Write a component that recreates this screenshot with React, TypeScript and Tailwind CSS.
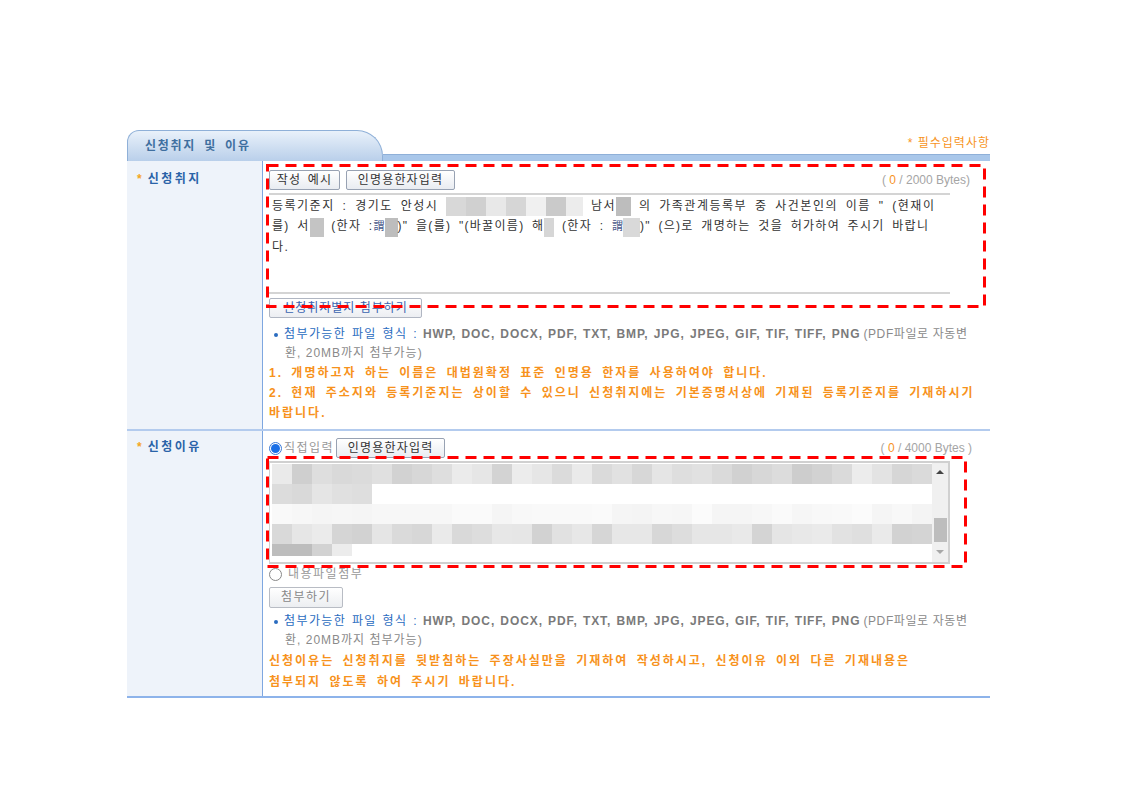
import React from 'react';

const shade = (seed: number, min: number, max: number) => {
  const x = Math.sin(seed * 12.9898) * 43758.5453;
  const f = x - Math.floor(x);
  const v = Math.round(min + f * (max - min));
  return `rgb(${v},${v},${v})`;
};

const Blocks: React.FC<{ count: number; seed: number; min: number; max: number; className?: string }> = ({ count, seed, min, max, className = 'h-[20px]' }) => (
  <div className="flex">
    {Array.from({ length: count }).map((_, i) => (
      <div key={i} className={`w-[20px] ${className}`} style={{ backgroundColor: shade(seed + i, min, max) }} />
    ))}
  </div>
);

const DashedBox: React.FC<{ w: number; h: number; className: string }> = ({ w, h, className }) => (
  <svg width={w} height={h} className={`pointer-events-none absolute ${className}`}>
    <rect x={1.5} y={1.5} width={w - 3} height={h - 3} fill="none" stroke="#ff0000" strokeWidth={3} strokeDasharray="11 7" />
  </svg>
);

const Btn: React.FC<{ children: React.ReactNode; className?: string }> = ({ children, className = '' }) => (
  <button className={`h-[20px] px-0 whitespace-nowrap rounded-[2px] border border-[#98a2b3] bg-gradient-to-b from-white to-[#e9ecf1] text-[12px] leading-[18px] tracking-[1.2px] [word-spacing:2px] text-[#333] ${className}`}>
    {children}
  </button>
);

const Gray: React.FC<{ w: string; c: string }> = ({ w, c }) => (
  <span className={`inline-block h-[19px] align-middle ${w} ${c}`} />
);

const Hanja = () => <span className="text-[11px] text-[#4a5a8a] tracking-normal">謂</span>;

const FileTypes = () => (
  <div className="text-[12px] leading-[19px]">
    <div className="flex items-center whitespace-nowrap">
      <span className="ml-[5px] mr-[6px] h-[4px] w-[4px] rounded-full bg-[#2a6cc0]" />
      <span className="text-[#2a6cc0] tracking-[1.4px] [word-spacing:1px]">첨부가능한 파일 형식 :</span>
      <span className="ml-[5px] font-bold text-[#7a7a7a] tracking-[0.9px] [word-spacing:1px]">HWP, DOC, DOCX, PDF, TXT, BMP, JPG, JPEG, GIF, TIF, TIFF, PNG</span>
      <span className="ml-[3px] text-[#8a8a8a] tracking-[0.6px]">(PDF파일로 자동변</span>
    </div>
    <div className="pl-[16px] text-[#8a8a8a] tracking-[1px]">환, 20MB까지 첨부가능)</div>
  </div>
);

const Label: React.FC<{ text: string; className: string }> = ({ text, className }) => (
  <div className={`bg-[#eef3fa] border-r border-[#7ea7e0] pl-[10px] ${className}`}>
    <div className="flex items-center text-[12px] leading-[16px]">
      <span className="mr-[6px] text-[#f5a623] font-bold">*</span>
      <span className="font-bold text-[#2a63a8] tracking-[2.5px]">{text}</span>
    </div>
  </div>
);

const Orange: React.FC<{ children: React.ReactNode; className?: string }> = ({ children, className = '' }) => (
  <div className={`whitespace-nowrap font-bold text-[12px] text-[#f7921c] tracking-[2px] [word-spacing:3px] ${className}`}>{children}</div>
);

export default function App() {
  return (
    <div className="min-h-[793px] bg-white pt-[128px] font-['Liberation_Sans','Noto_Sans_CJK_KR',sans-serif]">
      <div className="ml-[127px] w-[863px]">
        {/* header */}
        <div className="flex items-end h-[33px]">
          <div className="w-[256px] h-[31px] rounded-tl-[12px] rounded-tr-[26px] border border-b-0 border-[#8fb0d8] bg-gradient-to-b from-[#e9f1fa] to-[#b9cfea] flex items-center pl-[17px] text-[12px] font-bold text-[#3f6f9f] tracking-[1.75px] [word-spacing:3px]">
            신청취지 및 이유
          </div>
          <div className="flex-1 flex flex-col">
            <div className="text-right text-[12px] leading-[16px] text-[#f7941d] tracking-[1px] mb-[3px]">* 필수입력사항</div>
            <div className="h-[7px] bg-[#a9c7ea] border-t border-[#8fb0d8]" />
          </div>
        </div>

        {/* row 1 */}
        <div className="grid grid-cols-[136px_minmax(0,1fr)] border-b-2 border-[#b3cbee]">
          <Label text="신청취지" className="pt-[10px]" />
          <div className="relative pl-[6px] pt-[9px] pb-[6px] pr-[20px]">
            <div className="flex items-center justify-between h-[20px]">
              <div className="flex gap-[6px]">
                <Btn className="w-[71px]">작성 예시</Btn>
                <Btn className="w-[109px]">인명용한자입력</Btn>
              </div>
              <span className="text-[12px] text-[#a5a5a5]">
                ( <span className="text-[#f7931e]">0</span> / 2000 Bytes)
              </span>
            </div>
            <div className="mt-[3px] w-[681px] h-[101px] border-y-2 border-[#d4d4d4] pl-[3px] pt-[1px] text-[12px] leading-[20px] text-[#333] tracking-[1.5px] [word-spacing:3px] whitespace-nowrap">
              <div>
                등록기준지 : 경기도 안성시{' '}
                <span className="inline-flex align-middle">
                  <Gray w="w-[20px]" c="bg-[#d8d8d8]" />
                  <Gray w="w-[20px]" c="bg-[#d0d0d0]" />
                  <Gray w="w-[20px]" c="bg-[#e8e8e8]" />
                  <Gray w="w-[20px]" c="bg-[#d6d6d6]" />
                  <Gray w="w-[20px]" c="bg-[#f0f0f0]" />
                  <Gray w="w-[20px]" c="bg-[#cacaca]" />
                  <Gray w="w-[17px]" c="bg-[#ececec]" />
                </span>{' '}
                남서<Gray w="w-[15px]" c="bg-[#bdbdbd]" /> 의 가족관계등록부 중 사건본인의 이름 " (현재이
              </div>
              <div className="tracking-[1.3px]">
                를) 서<Gray w="w-[14px]" c="bg-[#c4c4c4]" /> (한자 :<Hanja /><Gray w="w-[13px]" c="bg-[#bdbdbd]" />)" 을(를) "(바꿀이름) 해
                <Gray w="w-[10px]" c="bg-[#d6d6d6]" /> (한자 : <Hanja /><Gray w="w-[17px]" c="bg-[#d9d9d9]" />)" (으)로 개명하는 것을 허가하여 주시기 바랍니
              </div>
              <div>다.</div>
            </div>
            <button className="mt-[4px] h-[20px] w-[153px] whitespace-nowrap rounded-[2px] border border-[#b0b6c2] bg-gradient-to-b from-white to-[#eceef2] text-[12px] leading-[18px] text-[#3a64b0] tracking-[1px]">
              신청취지별지 첨부하기
            </button>
            <div className="mt-[6px]">
              <FileTypes />
            </div>
            <div className="leading-[20px]">
              <Orange>1. 개명하고자 하는 이름은 대법원확정 표준 인명용 한자를 사용하여야 합니다.</Orange>
              <Orange>2. 현재 주소지와 등록기준지는 상이할 수 있으니 신청취지에는 기본증명서상에 기재된 등록기준지를 기재하시기</Orange>
              <Orange>바랍니다.</Orange>
            </div>
            <DashedBox w={720} h={144} className="left-[3px] top-[3px]" />
          </div>
        </div>

        {/* row 2 */}
        <div className="grid grid-cols-[136px_minmax(0,1fr)] border-b-2 border-[#8db3ea]">
          <Label text="신청이유" className="pt-[8px]" />
          <div className="relative pl-[6px] pt-[7px] pb-[3px] pr-[18px]">
            <div className="flex items-center justify-between h-[20px]">
              <div className="flex items-center">
                <span className="flex h-[13px] w-[13px] items-center justify-center rounded-full border border-[#3a7ad8] bg-white">
                  <span className="h-[9px] w-[9px] rounded-full bg-[#1a6fe6]" />
                </span>
                <span className="ml-[2px] text-[12px] text-[#999] tracking-[1.5px]">직접입력</span>
                <Btn className="ml-[2px] w-[109px]">인명용한자입력</Btn>
              </div>
              <span className="text-[12px] text-[#a5a5a5]">
                ( <span className="text-[#f7931e]">0</span> / 4000 Bytes )
              </span>
            </div>
            <div className="mt-[3px] flex w-[681px] h-[103px] border-2 border-l border-[#d0d0d0]">
              <div className="flex-1 pl-[2px] pt-[1px] overflow-hidden">
                <Blocks count={33} seed={1} min={205} max={236} />
                <Blocks count={5} seed={50} min={215} max={232} />
                <Blocks count={33} seed={80} min={244} max={251} />
                <Blocks count={33} seed={120} min={210} max={236} />
                <div className="flex">
                  <div className="w-[40px] h-[12px] bg-[#bdbdbd]" />
                  <div className="w-[20px] h-[12px] bg-[#d2d2d2]" />
                  <div className="w-[20px] h-[12px] bg-[#ececec]" />
                </div>
              </div>
              <div className="w-[16px] bg-[#f0f0f0] flex flex-col items-center">
                <svg width="10" height="8" viewBox="0 0 10 8" className="mt-[5px]">
                  <path d="M1 6 L5 2 L9 6 Z" fill="#444" />
                </svg>
                <div className="mt-[42px] h-[24px] w-[13px] bg-[#bdbdbd]" />
                <svg width="10" height="8" viewBox="0 0 10 8" className="mt-[6px]">
                  <path d="M1 2 L5 6 L9 2 Z" fill="#a8a8a8" />
                </svg>
              </div>
            </div>
            <div className="mt-[2px] flex items-center h-[16px]">
              <span className="h-[13px] w-[13px] rounded-full border border-[#888] bg-white" />
              <span className="ml-[6px] text-[12px] text-[#999] tracking-[1.5px]">내용파일첨부</span>
            </div>
            <button className="mt-[5px] h-[21px] w-[74px] whitespace-nowrap rounded-[2px] border border-[#b8bcc4] bg-gradient-to-b from-white to-[#eceef1] text-[12px] leading-[19px] text-[#888] tracking-[1.5px]">
              첨부하기
            </button>
            <div className="mt-[4px]">
              <FileTypes />
            </div>
            <div className="mt-[1px] leading-[21px]">
              <Orange>신청이유는 신청취지를 뒷받침하는 주장사실만을 기재하여 작성하시고, 신청이유 이외 다른 기재내용은</Orange>
              <Orange>첨부되지 않도록 하여 주시기 바랍니다.</Orange>
            </div>
            <DashedBox w={701} h={112} className="left-[3px] top-[25px]" />
          </div>
        </div>
      </div>
    </div>
  );
}
